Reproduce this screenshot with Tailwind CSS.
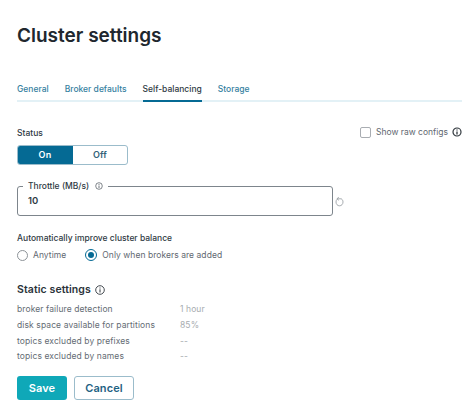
<!doctype html>
<html><head><meta charset="utf-8"><script src="https://cdn.jsdelivr.net/npm/@tailwindcss/browser@4"></script></head>
<body class="m-0 bg-white">
<div class="w-[474px] h-[414px] overflow-hidden px-[17px] font-['Inter','Liberation_Sans',sans-serif] text-[#2f3a44] antialiased">
  <h1 class="pt-[23px] text-[19px] leading-[26px] font-semibold text-[#20272e]">Cluster settings</h1>
  <div class="mt-[33px] w-[445px] h-[20px] flex gap-[16px] border-b-2 border-[#e3f1f6] text-[8.5px] leading-[14px] font-medium text-[#36819f]">
    <span class="h-[20px]">General</span>
    <span class="h-[20px]">Broker defaults</span>
    <span class="h-[20px] border-b-2 border-[#056a94] text-[#2f3a44]">Self-balancing</span>
    <span class="h-[20px]">Storage</span>
  </div>
  <div class="mt-[24px] flex justify-between items-start w-[445px]">
    <div>
      <div class="text-[8.5px] leading-[14px] font-medium">Status</div>
      <div class="mt-[5px] flex w-[111px] h-[20px] border border-[#9bbccb] rounded-[3px] overflow-hidden text-[9px] font-semibold tracking-[0.2px]">
        <span class="w-[56px] -my-px -ml-px bg-[#056a94] text-white flex items-center justify-center">On</span>
        <span class="flex-1 flex items-center justify-center text-[#33627a]">Off</span>
      </div>
    </div>
    <div class="flex items-center gap-[5px] -mt-[1px] text-[8.5px] leading-[14px] text-[#5f6871]">
      <span class="w-[11px] h-[11px] border border-[#a9adb2] rounded-[2px]"></span>
      <span>Show raw configs</span>
      <svg class="w-[10px] h-[10px] -ml-[1px]" viewBox="0 0 10 10" fill="none"><circle cx="5" cy="5" r="4" stroke="#30373d" stroke-width="1.2"/><path d="M5 4.4V7.4M5 2.6V3.6" stroke="#30373d" stroke-width="1.3"/></svg>
    </div>
  </div>
  <div class="relative mt-[21px] flex items-center w-[316px] h-[30px] border border-[#7d858c] rounded-[3px] pl-[10px] pt-[1px] text-[9.5px] font-semibold">
    10
    <div class="absolute -top-[8px] left-[5px] px-[5px] bg-white flex items-center gap-[6px] text-[8.5px] leading-[14px] font-medium">
      <span>Throttle (MB/s)</span>
      <svg class="w-[8px] h-[8px]" viewBox="0 0 8 8" fill="none"><circle cx="4" cy="4" r="3.3" stroke="#4a525a" stroke-width=".7"/><path d="M4 3.5V6M4 2V2.9" stroke="#4a525a" stroke-width=".8"/></svg>
    </div>
    <svg class="absolute -right-[12px] top-[9px] w-[9px] h-[11px]" viewBox="0 0 9 11" fill="none"><path d="M2 2.8H6.3C7.4 3.5 8 4.6 8 6C8 8.2 6.5 9.8 4.5 9.8S1 8.2 1 6C1 5 1.300 4.100 2 3.300M3.800 1L2 2.800L3.800 4.300" stroke="#92989d" stroke-width=".8"/></svg>
  </div>
  <div class="mt-[15px] text-[8.5px] leading-[14px] font-medium">Automatically improve cluster balance</div>
  <div class="mt-[3px] flex items-center h-[14px] text-[8.5px] tracking-[0.05px] text-[#5f6871]">
    <span class="w-[11px] h-[11px] rounded-full border border-[#8d9398]"></span>
    <span class="ml-[5px]">Anytime</span>
    <span class="ml-[19px] w-[12px] h-[12px] rounded-full border border-[#056a94] flex items-center justify-center"><span class="w-[6px] h-[6px] rounded-full bg-[#056a94]"></span></span>
    <span class="ml-[5px]">Only when brokers are added</span>
  </div>
  <div class="mt-[20px] flex items-center gap-[4px] text-[10.5px] leading-[16px] font-semibold tracking-[0.1px] text-[#2b333a]">
    <span>Static settings</span>
    <svg class="w-[10px] h-[10px]" viewBox="0 0 10 10" fill="none"><circle cx="5" cy="5" r="4.300" stroke="#30373d" stroke-width=".9"/><path d="M5 4.300V7.500M5 2.500V3.500" stroke="#30373d" stroke-width="1"/></svg>
  </div>
  <div class="mt-[4px] grid grid-cols-[163px_1fr] auto-rows-[15.600px] items-center text-[8.5px] tracking-[0.1px] text-[#646c74]">
    <span>broker failure detection</span><span class="text-[#a7acb0]">1 hour</span>
    <span>disk space available for partitions</span><span class="text-[#a7acb0]">85%</span>
    <span>topics excluded by prefixes</span><span class="text-[#a7acb0]">--</span>
    <span>topics excluded by names</span><span class="text-[#a7acb0]">--</span>
  </div>
  <div class="mt-[12px] flex gap-[7px] text-[11px] font-semibold tracking-[0.1px]">
    <span class="w-[50px] h-[24px] rounded-[3px] bg-[#0fa8b8] text-white flex items-center justify-center">Save</span>
    <span class="w-[60px] h-[24px] rounded-[3px] border border-[#9bbccb] text-[#1f6283] flex items-center justify-center">Cancel</span>
  </div>
</div>
</body></html>
